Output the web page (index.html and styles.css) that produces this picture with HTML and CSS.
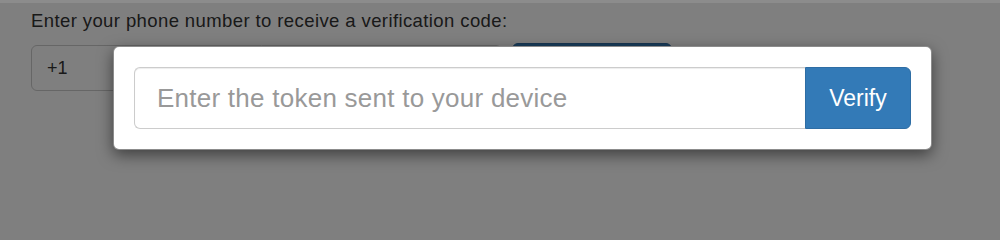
FILE: index.html
```html
<!DOCTYPE html>
<html>
<head>
<meta charset="utf-8">
<link rel="stylesheet" href="styles.css">
</head>
<body>
<div class="page">
  <p class="label">Enter your phone number to receive a verification code:</p>
  <div class="phone-row">
    <div class="field code">+1</div>
    <div class="field number"></div>
    <button class="send">Send code</button>
  </div>
</div>
<div class="backdrop"></div>
<div class="modal">
  <div class="token-group">
    <input class="token" type="text" placeholder="Enter the token sent to your device">
    <button class="verify">Verify</button>
  </div>
</div>
</body>
</html>
```
FILE: styles.css
```css
html, body {
  margin: 0;
  padding: 0;
  background: #fff;
  font-family: "Liberation Sans", Arial, sans-serif;
  width: 1000px;
  height: 202px;
  overflow: hidden;
}
.page {
  padding: 10px 0 0 31px;
}
.label {
  margin: 0;
  font-size: 18.5px;
  letter-spacing: 0.4px;
  line-height: 21px;
  color: #333;
}
.phone-row {
  display: flex;
  align-items: flex-start;
  margin-top: 14px;
}
.field {
  box-sizing: border-box;
  height: 46px;
  border: 1px solid #ccc;
  font-size: 18px;
  line-height: 44px;
  padding: 0 15px;
  color: #333;
}
.code {
  width: 231px;
  border-radius: 6px 0 0 6px;
}
.number {
  width: 240px;
  border-left: none;
  border-radius: 0 6px 6px 0;
}
.send {
  margin: -2px 0 0 10px;
  width: 160px;
  height: 50px;
  background: #337ab7;
  border: 1px solid #2e6da4;
  border-radius: 6px;
  color: #fff;
  font: 18px "Liberation Sans", Arial, sans-serif;
}
.backdrop {
  position: fixed;
  inset: 0;
  background: rgba(0,0,0,0.5);
  background-clip: padding-box;
  border-top: 3px solid rgba(0,0,0,0.45);
}
.modal {
  position: absolute;
  left: 113px;
  top: 46px;
  width: 819px;
  box-sizing: border-box;
  padding: 20px;
  background: #fff;
  border: 1px solid rgba(0,0,0,0.45);
  border-radius: 6px;
  box-shadow: 0 5px 15px rgba(0,0,0,0.5);
}
.token-group {
  display: flex;
  height: 62px;
}
.token {
  flex: 1;
  box-sizing: border-box;
  height: 62px;
  margin: 0;
  border: 1px solid #ccc;
  border-right: none;
  border-radius: 6px 0 0 6px;
  padding: 0 22px;
  font: 26px "Liberation Sans", Arial, sans-serif;
  letter-spacing: 0.25px;
  color: #555;
  outline: none;
  box-shadow: inset 0 1px 1px rgba(0,0,0,0.075);
}
.token::placeholder {
  color: #999;
}
.verify {
  box-sizing: border-box;
  width: 106px;
  height: 62px;
  margin: 0;
  background: #337ab7;
  border: 1px solid #2e6da4;
  border-radius: 0 6px 6px 0;
  color: #fff;
  font: 23px "Liberation Sans", Arial, sans-serif;
  padding: 0;
}
```
